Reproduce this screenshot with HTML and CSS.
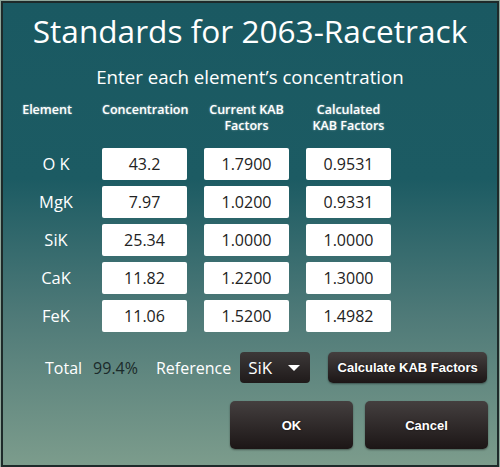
FILE: index.html
```html
<!DOCTYPE html>
<html lang="en">
<head>
  <meta charset="UTF-8" />
  <title>Standards for 2063-Racetrack</title>
  <link rel="stylesheet" href="styles.css">
</head>
<body>
  <div class="dialog">
    <h1 class="title">Standards for 2063-Racetrack</h1>
    <h2 class="subtitle">Enter each element’s concentration</h2>

    <div class="grid">
      <div class="head head-el">Element</div>
      <div class="head">Concentration</div>
      <div class="head">Current KAB<br>Factors</div>
      <div class="head">Calculated<br>KAB Factors</div>

      <div class="el">O K</div>
      <div class="box">43.2</div>
      <div class="box">1.7900</div>
      <div class="box">0.9531</div>

      <div class="el">MgK</div>
      <div class="box">7.97</div>
      <div class="box">1.0200</div>
      <div class="box">0.9331</div>

      <div class="el">SiK</div>
      <div class="box">25.34</div>
      <div class="box">1.0000</div>
      <div class="box">1.0000</div>

      <div class="el">CaK</div>
      <div class="box">11.82</div>
      <div class="box">1.2200</div>
      <div class="box">1.3000</div>

      <div class="el">FeK</div>
      <div class="box">11.06</div>
      <div class="box">1.5200</div>
      <div class="box">1.4982</div>
    </div>

    <div class="footer">
      <span class="label">Total</span>
      <span class="total">99.4%</span>
      <span class="label ref">Reference</span>
      <div class="select">SiK <span class="caret"></span></div>
      <button class="btn btn-calc">Calculate KAB Factors</button>
    </div>

    <div class="actions">
      <button class="btn btn-big">OK</button>
      <button class="btn btn-big">Cancel</button>
    </div>
  </div>
</body>
</html>
```

FILE: styles.css
```css
body {
  margin: 0;
  background: #8fa79b;
  font-family: "Open Sans", "Noto Sans", sans-serif;
}

.dialog {
  box-sizing: border-box;
  width: 498px;
  height: 466px;
  margin: 1px 0 0 1px;
  border: 2px solid #1e2a2a;
  background: linear-gradient(#1a5962 0%, #1c5b63 38%, #4f7a78 68%, #7c9c8c 100%);
  color: #fff;
  display: flex;
  flex-direction: column;
}

.title {
  margin: 8px 0 0;
  font-size: 31.6px;
  font-weight: 400;
  text-align: center;
  line-height: 40px;
}

.subtitle {
  margin: 14px 0 0;
  font-size: 18.7px;
  font-weight: 400;
  text-align: center;
  line-height: 24px;
}

.grid {
  display: grid;
  grid-template-columns: 68px 85px 85px 85px;
  column-gap: 17px;
  row-gap: 6px;
  padding-left: 14px;
  margin-top: 13px;
}

.head {
  font-size: 12.5px;
  font-weight: 600;
  line-height: 16px;
  text-align: center;
  margin-bottom: 8px;
  text-shadow: 0 0 2px rgba(255, 255, 255, 0.5);
}

.head-el {
  padding-right: 8px;
}

.el {
  font-size: 16.5px;
  line-height: 32px;
  text-align: center;
  padding-left: 10px;
}

.box {
  height: 32px;
  line-height: 32px;
  background: #fff;
  border-radius: 2px;
  color: #222;
  font-size: 16px;
  text-align: center;
}

.footer {
  display: flex;
  align-items: center;
  margin-top: 20px;
  padding-left: 42px;
  height: 31px;
}

.label {
  font-size: 16px;
}

.total {
  font-size: 16px;
  color: #1b2a2a;
  margin-left: 11px;
}

.ref {
  margin-left: 18px;
}

.select {
  box-sizing: border-box;
  width: 70px;
  height: 31px;
  margin-left: 9px;
  padding-left: 8px;
  border-radius: 4px;
  background: linear-gradient(#3c3838, #1f1a1a);
  font-size: 17px;
  line-height: 31px;
  display: flex;
  align-items: center;
  gap: 16px;
}

.caret {
  width: 0;
  height: 0;
  border-left: 6px solid transparent;
  border-right: 6px solid transparent;
  border-top: 6px solid #fff;
}

.btn {
  border: none;
  border-radius: 5px;
  background: linear-gradient(#443f3f, #1c1616);
  color: #fff;
  font-family: "Liberation Sans", Arial, sans-serif;
  font-weight: 700;
  text-shadow: 0 0 2px rgba(0, 0, 0, 0.6);
  box-shadow: 0 1px 2px rgba(0, 0, 0, 0.4);
}

.btn-calc {
  width: 159px;
  height: 31px;
  margin-left: 18px;
  font-size: 13px;
}

.actions {
  display: flex;
  justify-content: flex-end;
  gap: 12px;
  margin-top: 18px;
  padding-right: 9px;
}

.btn-big {
  width: 123px;
  height: 48px;
  font-size: 13px;
}
```
